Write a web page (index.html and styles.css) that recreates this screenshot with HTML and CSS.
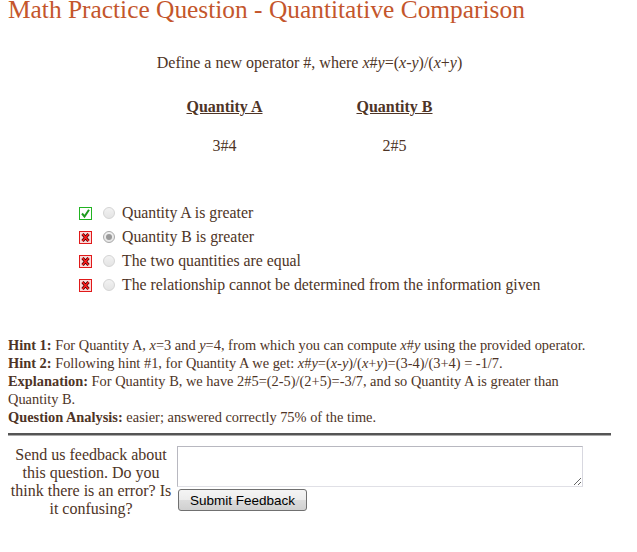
FILE: index.html
```html
<!DOCTYPE html>
<html>
<head>
<meta charset="utf-8">
<link rel="stylesheet" href="styles.css">
</head>
<body>
<div class="page">
  <h1 class="title">Math Practice Question - Quantitative Comparison</h1>
  <p class="question">Define a new operator #, where <i>x</i>#<i>y</i>=(<i>x</i>-<i>y</i>)/(<i>x</i>+<i>y</i>)</p>
  <div class="quantities">
    <div class="qcol">
      <div class="qhead">Quantity A</div>
      <div class="qval">3#4</div>
    </div>
    <div class="qcol">
      <div class="qhead">Quantity B</div>
      <div class="qval">2#5</div>
    </div>
  </div>
  <ul class="choices">
    <li class="choice">
      <svg class="mark" viewBox="0 0 13 13" width="13" height="13"><rect x="0.5" y="0.5" width="12" height="12" fill="#fff" stroke="#22b322"/><path d="M3 6.5 L5.5 9.5 L10 2.8" fill="none" stroke="#1f9b1f" stroke-width="2"/></svg>
      <span class="radio"></span>
      <span class="label">Quantity A is greater</span>
    </li>
    <li class="choice">
      <svg class="mark" viewBox="0 0 13 13" width="13" height="13"><rect x="0.5" y="0.5" width="12" height="12" fill="#ffd8d8" stroke="#e01a1a"/><path d="M3.5 3 L9.5 10 M9.5 3 L3.5 10" stroke="#3a0000" stroke-width="3"/><path d="M3.5 3 L9.5 10 M9.5 3 L3.5 10" stroke="#ff1a1a" stroke-width="1.6"/></svg>
      <span class="radio checked"></span>
      <span class="label">Quantity B is greater</span>
    </li>
    <li class="choice">
      <svg class="mark" viewBox="0 0 13 13" width="13" height="13"><rect x="0.5" y="0.5" width="12" height="12" fill="#ffd8d8" stroke="#e01a1a"/><path d="M3.5 3 L9.5 10 M9.5 3 L3.5 10" stroke="#3a0000" stroke-width="3"/><path d="M3.5 3 L9.5 10 M9.5 3 L3.5 10" stroke="#ff1a1a" stroke-width="1.6"/></svg>
      <span class="radio"></span>
      <span class="label">The two quantities are equal</span>
    </li>
    <li class="choice">
      <svg class="mark" viewBox="0 0 13 13" width="13" height="13"><rect x="0.5" y="0.5" width="12" height="12" fill="#ffd8d8" stroke="#e01a1a"/><path d="M3.5 3 L9.5 10 M9.5 3 L3.5 10" stroke="#3a0000" stroke-width="3"/><path d="M3.5 3 L9.5 10 M9.5 3 L3.5 10" stroke="#ff1a1a" stroke-width="1.6"/></svg>
      <span class="radio"></span>
      <span class="label">The relationship cannot be determined from the information given</span>
    </li>
  </ul>
  <div class="hints">
    <b>Hint 1:</b> For Quantity A, <i>x</i>=3 and <i>y</i>=4, from which you can compute <i>x</i>#<i>y</i> using the provided operator.<br>
    <b>Hint 2:</b> Following hint #1, for Quantity A we get: <i>x</i>#<i>y</i>=(<i>x</i>-<i>y</i>)/(<i>x</i>+<i>y</i>)=(3-4)/(3+4) = -1/7.<br>
    <b>Explanation:</b> For Quantity B, we have 2#5=(2-5)/(2+5)=-3/7, and so Quantity A is greater than Quantity B.<br>
    <b>Question Analysis:</b> easier; answered correctly 75% of the time.
  </div>
  <hr class="rule">
  <form class="feedback">
    <div class="fb-text">Send us feedback about this question. Do you think there is an error? Is it confusing?</div>
    <div class="fb-inputs">
      <textarea class="fb-area"></textarea>
      <button type="button" class="fb-button">Submit Feedback</button>
    </div>
  </form>
</div>
</body>
</html>
```

FILE: styles.css
```css
html, body {
  margin: 0;
  padding: 0;
  background: #fff;
}
body {
  padding: 0 8px;
  font-family: "Liberation Serif", "Times New Roman", serif;
  color: #4e3426;
}
.page {
  width: 603px;
}
.title {
  margin: 0;
  font-size: 25.4px;
  line-height: 18px;
  font-weight: normal;
  color: #c4562c;
  white-space: nowrap;
}
.question {
  margin: 36px 0 0;
  text-align: center;
  font-size: 16px;
  line-height: 18px;
}
.quantities {
  display: flex;
  justify-content: center;
  margin-top: 26px;
}
.qcol {
  width: 170px;
  text-align: center;
  font-size: 16px;
  line-height: 18px;
}
.qhead {
  font-weight: bold;
  text-decoration: underline;
}
.qval {
  margin-top: 21px;
}
.choices {
  list-style: none;
  margin: 46px 0 0;
  padding: 0 0 0 71px;
}
.choice {
  display: flex;
  align-items: center;
  height: 24px;
  font-size: 15.8px;
}
.mark {
  flex: none;
  display: block;
}
.radio {
  flex: none;
  width: 10px;
  height: 10px;
  margin-left: 11px;
  border-radius: 50%;
  border: 1px solid #d4d4d4;
  background: linear-gradient(#f2f2f2, #e4e4e4);
  position: relative;
}
.radio.checked {
  border-color: #a8a8a8;
}
.radio.checked::after {
  content: "";
  position: absolute;
  left: 2px;
  top: 2px;
  width: 6px;
  height: 6px;
  border-radius: 50%;
  background: #9a9a9a;
}
.label {
  margin-left: 7px;
}
.hints {
  margin-top: 39px;
  font-size: 14.4px;
  line-height: 18px;
}
.rule {
  margin: 7px 0 0;
  height: 0;
  border: 0;
  border-top: 2px solid #555;
  border-bottom: 1px solid #aaa;
}
.feedback {
  display: flex;
  margin-top: 10px;
}
.fb-text {
  width: 166px;
  flex: none;
  text-align: center;
  font-size: 16px;
  line-height: 18px;
}
.fb-inputs {
  margin-left: 3px;
  display: flex;
  flex-direction: column;
  align-items: flex-start;
}
.fb-area {
  width: 400px;
  height: 35px;
  margin: 0;
  border: 1px solid #b8b8c0;
  border-right-color: #d8d8e0;
  border-bottom-color: #e0e0e6;
  border-radius: 0;
  padding: 2px;
  font-family: "Liberation Mono", monospace;
}
.fb-button {
  margin: 2px 0 0 1px;
  height: 22px;
  padding: 0 11px;
  font-family: "Liberation Sans", Arial, sans-serif;
  font-size: 13.5px;
  color: #000;
  border: 1px solid #707070;
  border-radius: 3px;
  background: linear-gradient(#f4f4f4 0%, #ececec 50%, #dcdcdc 51%, #d0d0d0 100%);
}
```
